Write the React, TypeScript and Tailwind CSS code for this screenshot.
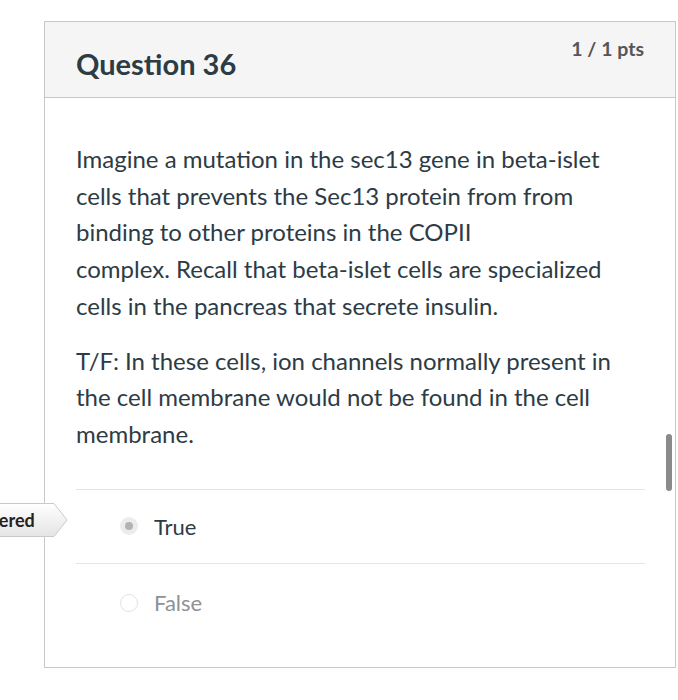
import React from "react";

export default function App() {
  const font = { fontFamily: "Lato, 'Noto Sans', sans-serif" };
  return (
    <div className="relative w-[678px] h-[700px] bg-white overflow-hidden" style={font}>
      <div className="absolute left-[44px] top-[21px] w-[632px] h-[647px] border border-[#c4c9cc] flex flex-col">
        <div className="h-[76px] bg-[#f5f5f5] border-b border-[#c4c9cc] flex justify-between pl-[31px] pr-[31px]">
          <div className="pt-[24px] text-[29px] font-bold text-[#2d3b45] leading-[36px]">Question 36</div>
          <div className="pt-[14px] text-[19.5px] font-bold text-[#555] leading-[26px]">1 / 1 pts</div>
        </div>
        <div className="pl-[31px] pr-[29px] pt-[43px] text-[24px] leading-[36.7px] text-[#2d3b45]">
          <p>
            Imagine a mutation in the sec13 gene in beta-islet cells that prevents the Sec13 protein from from binding to other proteins in the COPII
            <br />
            complex. Recall that beta-islet cells are specialized cells in the pancreas that secrete insulin.
          </p>
          <p className="mt-[18px]">
            T/F: In these cells, ion channels normally present in the cell membrane would not be found in the cell membrane.
          </p>
        </div>
        <div className="mt-[36px] ml-[31px] mr-[30px] border-t border-[#e5e5e5]">
          <div className="h-[74px] flex items-center pl-[44px] border-b border-[#e5e5e5]">
            <span className="w-[18px] h-[18px] rounded-full bg-[#ececec] flex items-center justify-center">
              <span className="w-[8px] h-[8px] rounded-full bg-[#b3b3b3]" />
            </span>
            <span className="ml-[16px] text-[22px] text-[#2d3b45]">True</span>
          </div>
          <div className="h-[78px] flex items-center pl-[44px]">
            <span className="w-[18px] h-[18px] rounded-full border border-[#e3e3e3] bg-white" />
            <span className="ml-[16px] text-[22px] text-[#8e9295]">False</span>
          </div>
        </div>
      </div>
      <div className="absolute left-[666px] top-[434px] w-[6px] h-[57px] rounded-full bg-[#8a8a8a]" />
      <div className="absolute left-[-46px] top-[503px] h-[34px]">
        <svg width="114" height="34" viewBox="0 0 114 34" className="absolute left-0 top-0">
          <defs>
            <linearGradient id="g" x1="0" y1="0" x2="0" y2="1">
              <stop offset="0" stopColor="#ffffff" />
              <stop offset="1" stopColor="#e4e4e4" />
            </linearGradient>
          </defs>
          <path d="M0.5 0.5 H100 L113 17 L100 33.5 H0.5 Z" fill="url(#g)" stroke="#c9c9c9" />
        </svg>
        <span className="relative block text-[18px] font-bold leading-[34px] text-[#222]">Answered</span>
      </div>
    </div>
  );
}
